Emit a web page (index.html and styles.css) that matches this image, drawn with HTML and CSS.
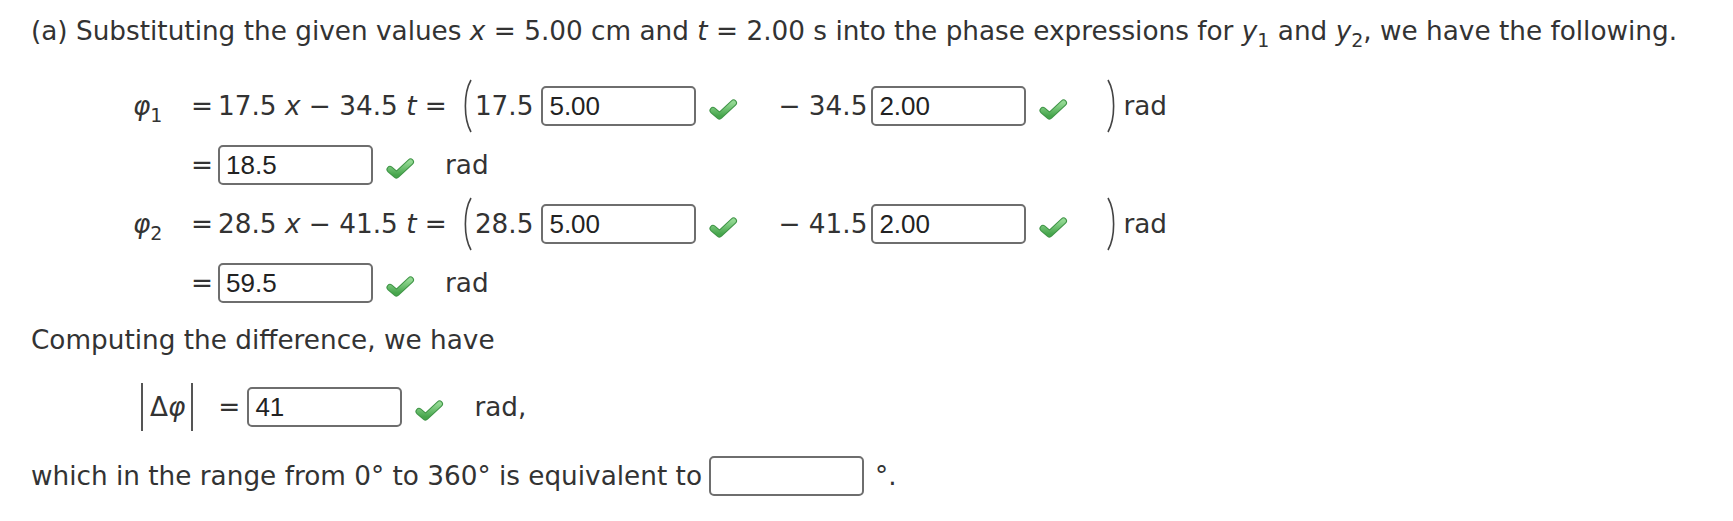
FILE: index.html
```html
<!DOCTYPE html>
<html>
<head>
<meta charset="utf-8">
<link rel="stylesheet" href="styles.css">
</head>
<body>
<svg class="defs" width="0" height="0" aria-hidden="true">
  <defs>
    <linearGradient id="chkg" x1="0" y1="0" x2="0" y2="1">
      <stop offset="0" stop-color="#92d892"/>
      <stop offset="1" stop-color="#46a54c"/>
    </linearGradient>
    <symbol id="chk" viewBox="0 0 30 24">
      <path d="M5 13.5 L11.5 19 L25.5 6" fill="none" stroke="#3f9446" stroke-width="7" stroke-linecap="round" stroke-linejoin="round"/>
      <path d="M5 13.5 L11.5 19 L25.5 6" fill="none" stroke="url(#chkg)" stroke-width="5" stroke-linecap="round" stroke-linejoin="round"/>
    </symbol>
    <symbol id="lp" viewBox="0 0 12 54">
      <path d="M10 1 C2.5 14 2.5 40 10 53" fill="none" stroke="#444" stroke-width="1.6"/>
    </symbol>
    <symbol id="rp" viewBox="0 0 12 54">
      <path d="M2 1 C9.5 14 9.5 40 2 53" fill="none" stroke="#444" stroke-width="1.6"/>
    </symbol>
  </defs>
</svg>
<div class="page">
  <p class="line intro">(a) Substituting the given values <i>x</i> = 5.00 cm and <i>t</i> = 2.00 s into the phase expressions for <i>y</i><sub>1</sub> and <i>y</i><sub>2</sub>, we have the following.</p>

  <div class="eqs">
    <div class="row">
      <span class="lbl"><i>φ</i><sub>1</sub></span>
      <span class="eq">=</span>
      <span class="expr">17.5 <i>x</i> − 34.5 <i>t</i> =</span>
      <svg class="paren lpar"><use href="#lp"/></svg>
      <span class="num">17.5</span>
      <span class="box">5.00</span>
      <svg class="chk"><use href="#chk"/></svg>
      <span class="minus">− 34.5</span>
      <span class="box">2.00</span>
      <svg class="chk"><use href="#chk"/></svg>
      <svg class="paren rpar"><use href="#rp"/></svg>
      <span class="unit">rad</span>
    </div>
    <div class="row">
      <span class="lbl"></span>
      <span class="eq">=</span>
      <span class="box">18.5</span>
      <svg class="chk"><use href="#chk"/></svg>
      <span class="unit2">rad</span>
    </div>
    <div class="row">
      <span class="lbl"><i>φ</i><sub>2</sub></span>
      <span class="eq">=</span>
      <span class="expr">28.5 <i>x</i> − 41.5 <i>t</i> =</span>
      <svg class="paren lpar"><use href="#lp"/></svg>
      <span class="num">28.5</span>
      <span class="box">5.00</span>
      <svg class="chk"><use href="#chk"/></svg>
      <span class="minus">− 41.5</span>
      <span class="box">2.00</span>
      <svg class="chk"><use href="#chk"/></svg>
      <svg class="paren rpar"><use href="#rp"/></svg>
      <span class="unit">rad</span>
    </div>
    <div class="row">
      <span class="lbl"></span>
      <span class="eq">=</span>
      <span class="box">59.5</span>
      <svg class="chk"><use href="#chk"/></svg>
      <span class="unit2">rad</span>
    </div>
  </div>

  <p class="line computing">Computing the difference, we have</p>

  <div class="row diff">
    <span class="abs">Δ<i>φ</i></span>
    <span class="eq2">=</span>
    <span class="box">41</span>
    <svg class="chk"><use href="#chk"/></svg>
    <span class="unit3">rad,</span>
  </div>

  <div class="row last">
    <span>which in the range from 0° to 360° is equivalent to</span>
    <span class="box empty"></span>
    <span class="deg">°.</span>
  </div>
</div>
</body>
</html>
```

FILE: styles.css
```css
html, body {
  margin: 0;
  padding: 0;
  background: #ffffff;
}

body {
  color: #333333;
  font-family: "DejaVu Sans", Verdana, sans-serif;
  font-size: 26.3px;
}

.defs {
  display: block;
  width: 0;
  height: 0;
  overflow: hidden;
}

.page {
  padding: 11px 0 0 31px;
}

.line {
  margin: 0;
  height: 40px;
  line-height: 40px;
  white-space: nowrap;
}

i {
  font-style: italic;
}

sub {
  font-size: 19px;
  line-height: 0;
  vertical-align: -7px;
}

.eqs {
  margin-top: 25px;
}

.row {
  display: flex;
  align-items: center;
  height: 59px;
  white-space: nowrap;
}

.lbl {
  flex: none;
  width: 58px;
  margin-left: 102px;
}

.eq {
  flex: none;
  width: 27px;
}

.paren {
  width: 12px;
  height: 54px;
  flex: none;
}

.lpar {
  margin: 0 2px 0 14px;
}

.rpar {
  margin: 0 0 0 38px;
}

.num {
  margin-right: 8px;
}

.box {
  box-sizing: border-box;
  flex: none;
  width: 155px;
  height: 40px;
  padding-left: 6px;
  border: 2px solid #6e6e6e;
  border-radius: 5px;
  font-family: "Liberation Sans", Arial, sans-serif;
  font-size: 26px;
  line-height: 36px;
  color: #222222;
}

.chk {
  flex: none;
  width: 30px;
  height: 24px;
  margin: 6px 0 0 12px;
}

.minus {
  margin: 0 4px 0 40px;
}

.unit {
  margin-left: 5px;
}

.unit2 {
  margin-left: 30px;
}

.computing {
  margin-top: 8px;
}

.diff {
  height: 60px;
  margin-top: 17px;
}

.abs {
  margin-left: 110px;
  height: 48px;
  line-height: 48px;
  padding: 0 6px 0 7px;
  border-left: 2px solid #555555;
  border-right: 2px solid #555555;
}

.eq2 {
  margin: 0 7px 0 25px;
}

.unit3 {
  margin-left: 30px;
}

.last {
  height: 40px;
  margin-top: 19px;
}

.last .box {
  margin-left: 7px;
}

.deg {
  margin-left: 11px;
}
```
